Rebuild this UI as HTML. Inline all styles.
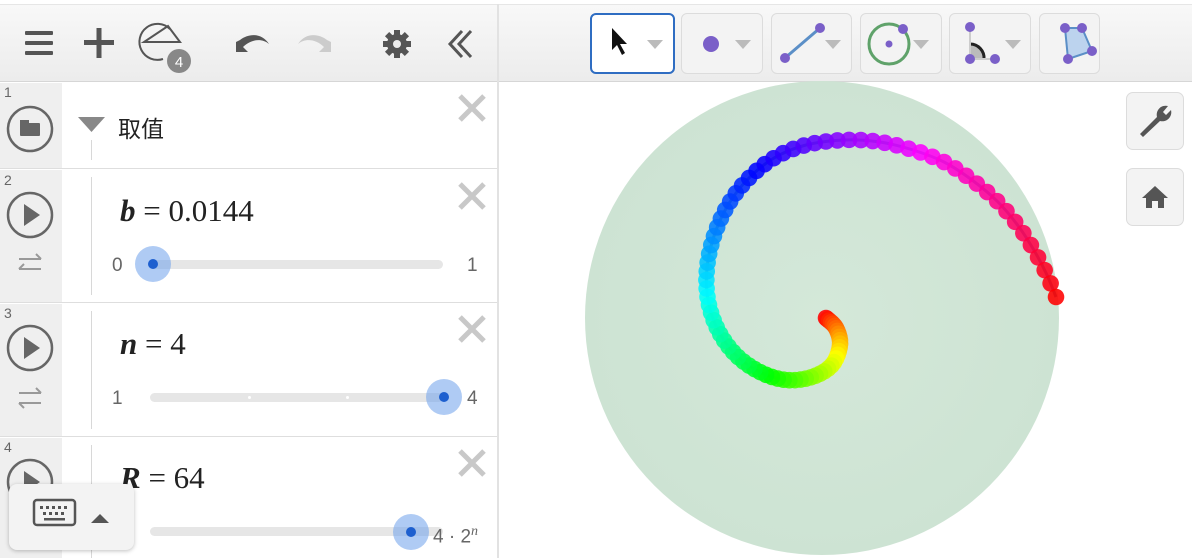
<!DOCTYPE html>
<html><head><meta charset="utf-8">
<style>
*{margin:0;padding:0;box-sizing:border-box}
body{width:1192px;height:558px;overflow:hidden;background:#fff;font-family:"Liberation Sans","Noto Sans CJK SC",sans-serif;position:relative}
.abs{position:absolute}
.topbar{left:0;top:4px;width:1192px;height:78px;background:linear-gradient(#f8f8f8,#ececec);border-bottom:1px solid #d6d6d6;border-top:1px solid #e6e6e6}
.div{left:497px;top:4px;width:2px;height:554px;background:#e2e2e2}
.tb{top:13px;height:61px;background:#f3f3f3;border:1px solid #dcdcdc;border-radius:6px}
.gut{left:0;width:62px;background:#efefef}
.row{left:0;width:497px;border-bottom:1px solid #dedede}
.num{font-size:14px;color:#666;left:4px}
.vl{left:91px;width:1px;background:#d8d8d8}
.math{font-family:"Liberation Serif",serif;font-size:31px;color:#222;left:120px}
.math i{font-weight:bold}
.lab{font-size:19px;color:#666}
.track{left:150px;width:293px;height:9px;background:#e6e6e6;border-radius:5px}
.halo{width:36px;height:36px;border-radius:50%;background:rgba(110,160,235,.55)}
.dot{width:10px;height:10px;border-radius:50%;background:#1d5fcf}
.sb{left:1126px;width:58px;height:58px;background:#f3f3f3;border:1px solid #dcdcdc;border-radius:7px}
</style></head><body>
<div class="abs topbar"></div>
<div class="abs div"></div>
<svg class="abs" style="left:0;top:0" width="498" height="82">
<g fill="#555"><rect x="25" y="31" width="28" height="4" rx="1"/><rect x="25" y="41" width="28" height="4" rx="1"/><rect x="25" y="51" width="28" height="4" rx="1"/>
<rect x="84" y="40" width="30" height="5"/><rect x="96.5" y="28" width="5" height="30"/></g>
<g fill="none" stroke="#555" stroke-width="2"><path d="M170 29 A18 18 0 1 0 163 59"/><path d="M144 42 L180 42 L168 26 Z"/></g>
<circle cx="179" cy="61" r="12" fill="#888"/><text x="179" y="67" font-size="15" fill="#fff" text-anchor="middle" font-family="Liberation Sans">4</text>
<path d="M236 42 L236 52 L248 52 L243 47 C251 39 262 38 269 44 C262 33 249 33 240 40 Z" fill="#555"/>
<path d="M331 42 L331 52 L319 52 L324 47 C316 39 305 38 298 44 C305 33 318 33 327 40 Z" fill="#ccc"/>
<g transform="translate(397,44)" fill="#555"><circle r="10"/><g id="t"><rect x="-3" y="-14" width="6" height="28"/></g><use href="#t" transform="rotate(45)"/><use href="#t" transform="rotate(90)"/><use href="#t" transform="rotate(135)"/><circle r="4" fill="#ececec"/></g>
<g fill="none" stroke="#555" stroke-width="3"><path d="M462 31 L450 44 L462 57"/><path d="M471 31 L459 44 L471 57"/></g>
</svg>
<div class="abs tb" style="left:590px;width:85px;background:#fff;border:2px solid #2f6dc2"></div>
<div class="abs tb" style="left:681px;width:82px"></div>
<div class="abs tb" style="left:771px;width:81px"></div>
<div class="abs tb" style="left:860px;width:82px"></div>
<div class="abs tb" style="left:949px;width:82px"></div>
<div class="abs tb" style="left:1039px;width:61px"></div>
<svg class="abs" style="left:580px;top:0" width="612" height="90">
<path d="M32 28 L32 50 L37 45 L42 55 L45 53 L40 44 L47 44 Z" fill="#111"/>
<g fill="#bbb"><path d="M67 40h16l-8 9z"/><path d="M155 40h16l-8 9z"/><path d="M245 40h16l-8 9z"/><path d="M333 40h16l-8 9z"/><path d="M425 40h16l-8 9z"/></g>
<circle cx="131" cy="44" r="8" fill="#7a5fc8"/>
<line x1="205" y1="58" x2="240" y2="28" stroke="#5b8fc7" stroke-width="3"/><circle cx="205" cy="58" r="5" fill="#7a5fc8"/><circle cx="240" cy="28" r="5" fill="#7a5fc8"/>
<circle cx="309" cy="44" r="20" fill="none" stroke="#5fa26a" stroke-width="3"/><circle cx="309" cy="44" r="3.5" fill="#7a5fc8"/><circle cx="323" cy="29" r="5" fill="#7a5fc8"/>
<path d="M390 59 L390 44 A14 14 0 0 1 404 59 Z" fill="#bbb"/><path d="M390 44 A14 14 0 0 1 404 59" fill="none" stroke="#222" stroke-width="3"/>
<line x1="390" y1="59" x2="390" y2="27" stroke="#ccc" stroke-width="2"/><line x1="390" y1="59" x2="415" y2="59" stroke="#ccc" stroke-width="2"/>
<circle cx="390" cy="59" r="5" fill="#7a5fc8"/><circle cx="390" cy="27" r="5" fill="#7a5fc8"/><circle cx="415" cy="59" r="5" fill="#7a5fc8"/>
<path d="M485 28 L502 28 L512 51 L488 59 Z" fill="#bcd3ee" stroke="#5b8fc7" stroke-width="2"/>
<circle cx="485" cy="28" r="5" fill="#7a5fc8"/><circle cx="502" cy="28" r="5" fill="#7a5fc8"/><circle cx="512" cy="51" r="5" fill="#7a5fc8"/><circle cx="488" cy="59" r="5" fill="#7a5fc8"/>
</svg>
<div class="abs row" style="top:82px;height:87px"></div>
<div class="abs row" style="top:169px;height:134px"></div>
<div class="abs row" style="top:303px;height:134px"></div>
<div class="abs gut" style="top:83px;height:85px"></div>
<div class="abs gut" style="top:170px;height:132px"></div>
<div class="abs gut" style="top:304px;height:132px"></div>
<div class="abs gut" style="top:438px;height:120px"></div>
<div class="abs num" style="top:84px">1</div>
<div class="abs num" style="top:172px">2</div>
<div class="abs num" style="top:305px">3</div>
<div class="abs num" style="top:439px">4</div>
<div class="abs vl" style="top:140px;height:20px"></div>
<div class="abs vl" style="top:177px;height:118px"></div>
<div class="abs vl" style="top:311px;height:118px"></div>
<div class="abs vl" style="top:445px;height:113px"></div>
<svg class="abs" style="left:0;top:82px" width="498" height="476">
<g fill="none" stroke="#666" stroke-width="2.5"><circle cx="30" cy="47" r="22"/><circle cx="30" cy="133" r="22"/><circle cx="30" cy="266" r="22"/><circle cx="30" cy="400" r="22"/></g>
<rect x="20" y="41" width="20" height="13" rx="1" fill="#666"/><rect x="20" y="38" width="9" height="5" fill="#666"/>
<path d="M24 122 L40 133 L24 144Z M24 255 L40 266 L24 277Z M24 389 L40 400 L24 411Z" fill="#666"/>
<g stroke="#999" stroke-width="2" fill="none"><path d="M19 177h22M19 187h22M36 172l5 5M24 182l-5 5"/><path d="M19 311h22M19 321h22M36 306l5 5M24 326l-5-5"/></g>
<path d="M78 35h27l-13.5 15z" fill="#888"/>
<g stroke="#c8c8c8" stroke-width="5"><path d="M460 14l24 24M484 14l-24 24"/><path d="M460 102l24 24M484 102l-24 24"/><path d="M460 235l24 24M484 235l-24 24"/><path d="M460 369l24 24M484 369l-24 24"/></g>
</svg>
<div class="abs" style="left:118px;top:110px;font-size:23px;color:#222">取值</div>
<div class="abs math" style="top:193px"><i>b</i> = 0.0144</div>
<div class="abs math" style="top:326px"><i>n</i> = 4</div>
<div class="abs math" style="top:460px"><i>R</i> = 64</div>
<div class="abs track" style="top:260px"></div>
<div class="abs track" style="top:393px"></div>
<div class="abs track" style="top:527px"></div>
<div class="abs" style="left:248px;top:396px;width:3px;height:3px;background:#fff;border-radius:50%"></div>
<div class="abs" style="left:346px;top:396px;width:3px;height:3px;background:#fff;border-radius:50%"></div>
<div class="abs halo" style="left:135px;top:246px"></div><div class="abs dot" style="left:148px;top:259px"></div>
<div class="abs halo" style="left:426px;top:379px"></div><div class="abs dot" style="left:439px;top:392px"></div>
<div class="abs halo" style="left:393px;top:514px"></div><div class="abs dot" style="left:406px;top:527px"></div>
<div class="abs lab" style="left:112px;top:255px">0</div>
<div class="abs lab" style="left:467px;top:255px">1</div>
<div class="abs lab" style="left:112px;top:388px">1</div>
<div class="abs lab" style="left:467px;top:388px">4</div>
<div class="abs lab" style="left:433px;top:524px">4 · 2<sup style="font-size:14px;font-family:'Liberation Serif';font-style:italic">n</sup></div>
<div class="abs" style="left:9px;top:484px;width:125px;height:66px;background:#f3f3f3;border-radius:8px;box-shadow:0 1px 4px rgba(0,0,0,.25)"></div>
<svg class="abs" style="left:9px;top:484px" width="125" height="66">
<rect x="25" y="16" width="41" height="25" rx="3" fill="none" stroke="#555" stroke-width="2.5"/>
<g fill="#555"><rect x="31" y="22" width="3" height="3"/><rect x="37" y="22" width="3" height="3"/><rect x="43" y="22" width="3" height="3"/><rect x="49" y="22" width="3" height="3"/><rect x="55" y="22" width="3" height="3"/><rect x="34" y="28" width="3" height="3"/><rect x="40" y="28" width="3" height="3"/><rect x="46" y="28" width="3" height="3"/><rect x="52" y="28" width="3" height="3"/><rect x="35" y="34" width="21" height="2.5"/>
<path d="M82 39h18l-9-9z"/></g>
</svg>
<svg id="g" class="abs" style="left:0;top:0" width="1192" height="558">
<defs><radialGradient id="rg" cx="822" cy="318" r="237" gradientUnits="userSpaceOnUse"><stop offset="0" stop-color="#d4e8d9"/><stop offset="1" stop-color="#cde3d3"/></radialGradient></defs>
<circle cx="822" cy="318" r="237" fill="url(#rg)"/>
<path id="sp" fill="none" stroke="#4f7fa6" stroke-width="3"/>
<g id="dots"></g>
</svg>
<div class="abs sb" style="top:92px"></div>
<div class="abs sb" style="top:168px"></div>
<svg class="abs" style="left:1126px;top:92px" width="58" height="136">
<path d="M14 42 L31 25 A9 9 0 0 1 42 14 L37 20 L40 23 L45 18 A9 9 0 0 1 34 29 L17 45 Z" fill="#555"/>
<path d="M29 94 L16 106 L20 106 L20 116 L26 116 L26 109 L32 109 L32 116 L38 116 L38 106 L42 106 Z" fill="#555"/>
</svg>
<script>
var P=[[826,318],[836,328],[840,345],[832,365],[812,377],[786,380],[760,372],[736,355],[718,330],[708,300],[707,268],[714,236],[728,205],[748,179],[774,158],[806,145],[845,140],[880,142],[913,150],[944,162],[972,180],[998,202],[1019,227],[1035,252],[1047,275],[1056,297]];
var d="M"+P[0];
for(var i=0;i<P.length-1;i++){var p0=P[Math.max(i-1,0)],p1=P[i],p2=P[i+1],p3=P[Math.min(i+2,P.length-1)];
d+=" C"+(p1[0]+(p2[0]-p0[0])/6)+","+(p1[1]+(p2[1]-p0[1])/6)+" "+(p2[0]-(p3[0]-p1[0])/6)+","+(p2[1]-(p3[1]-p1[1])/6)+" "+p2[0]+","+p2[1];}
var sp=document.getElementById("sp");sp.setAttribute("d",d);
var L=sp.getTotalLength(),N=90,g=document.getElementById("dots"),s="";
var a=2,b=(L-a*(N-1))/((N-1)*(N-1));
for(var i=0;i<N;i++){var l=a*i+b*i*i;var pt=sp.getPointAtLength(Math.min(l,L));var h=360*i/(N-1);
s+='<circle cx="'+pt.x+'" cy="'+pt.y+'" r="8.3" fill="hsl('+h+',100%,50%)" fill-opacity="0.88"/>';}
g.innerHTML=s;
</script>
</body></html>
